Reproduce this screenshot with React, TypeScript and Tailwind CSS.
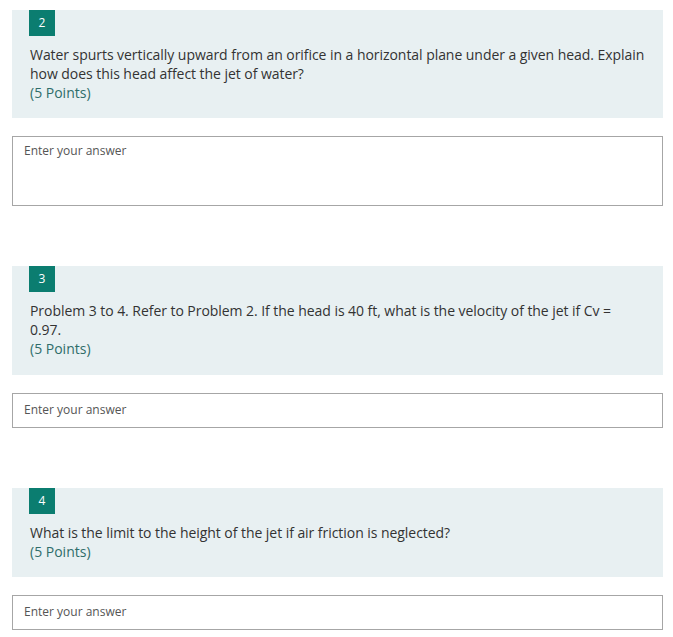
const questions = [
  {
    n: 2,
    text: "Water spurts vertically upward from an orifice in a horizontal plane under a given head. Explain how does this head affect the jet of water?",
    tall: true,
    textWidth: "max-w-[630px]",
    bottom: "pb-[16px]",
  },
  {
    n: 3,
    text: "Problem 3 to 4. Refer to Problem 2. If the head is 40 ft, what is the velocity of the jet if Cv = 0.97.",
    tall: false,
    textWidth: "max-w-[600px]",
    bottom: "pb-[17px]",
  },
  {
    n: 4,
    text: "What is the limit to the height of the jet if air friction is neglected?",
    tall: false,
    textWidth: "max-w-[630px]",
    bottom: "pb-[16px]",
  },
];

function Question({
  n,
  text,
  tall,
  textWidth,
  bottom,
}: {
  n: number;
  text: string;
  tall: boolean;
  textWidth: string;
  bottom: string;
}) {
  return (
    <section>
      <div className={`bg-[#e8f0f2] pl-[17px] pr-[8px] ${bottom}`}>
        <div className="flex h-[26px] w-[26px] items-center justify-center bg-[#0b7d70] text-[12px] text-white">
          {n}
        </div>
        <p className={`mt-[9px] pl-px text-[14px] leading-[19px] tracking-[-0.05px] text-[#333] ${textWidth}`}>
          {text}
        </p>
        <p className="pl-px text-[14px] leading-[19px] text-[#2f6d6a]">(5 Points)</p>
      </div>
      <div
        className={`mt-[18px] border border-[#a6a6a6] bg-white px-[11px] ${
          tall ? "h-[70px] pt-[6px]" : "h-[35px] pt-[8px]"
        }`}
      >
        <p className="text-[12px] leading-[16px] text-[#555]">Enter your answer</p>
      </div>
    </section>
  );
}

export default function App() {
  return (
    <div
      className="h-[637px] w-[673px] bg-white pl-[12px] pr-[10px] pt-[10px]"
      style={{ fontFamily: '"Open Sans", "Noto Sans", sans-serif' }}
    >
      <div className="flex flex-col gap-[60px]">
        {questions.map((q) => (
          <Question key={q.n} {...q} />
        ))}
      </div>
    </div>
  );
}
